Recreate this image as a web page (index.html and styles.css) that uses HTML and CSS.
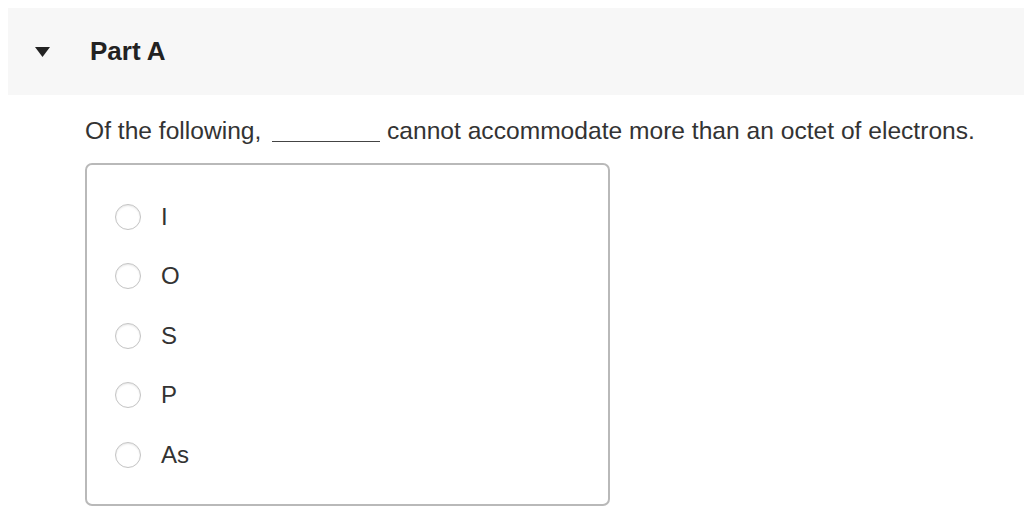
FILE: index.html
```html
<!DOCTYPE html>
<html lang="en">
<head>
  <meta charset="UTF-8">
  <title>Part A</title>
  <link rel="stylesheet" href="styles.css">
</head>
<body>

  <section class="part">
    <header class="part-head">
      <svg class="caret" width="15" height="10" viewBox="0 0 15 10" aria-hidden="true">
        <path d="M0 0 H15 L7.5 10 Z" fill="#222"/>
      </svg>
      <h2>Part A</h2>
    </header>

    <div class="part-body">
      <p class="question">Of the following, <span class="blank"></span> cannot accommodate more than an octet of electrons.</p>

      <!-- answer choices -->
      <div class="choices">
        <label class="choice"><input type="radio" name="answer" value="I"><span>I</span></label>
        <label class="choice"><input type="radio" name="answer" value="O"><span>O</span></label>
        <label class="choice"><input type="radio" name="answer" value="S"><span>S</span></label>
        <label class="choice"><input type="radio" name="answer" value="P"><span>P</span></label>
        <label class="choice"><input type="radio" name="answer" value="As"><span>As</span></label>
      </div>
    </div>
  </section>

</body>
</html>
```

FILE: styles.css
```css
:root {
  --band-bg: #f7f7f7;
  --text-color: #333333;
  --head-color: #222222;
  --box-border: #b9b9b9;
  --font-sans: "Liberation Sans", Arial, sans-serif;
}
*, *::before, *::after {
  box-sizing: border-box;
  margin: 0;
  padding: 0;
}
body {
  font-family: var(--font-sans);
  color: var(--text-color);
  background: #fff;
  padding: 8px 0 0 8px;
}
.part-head {
  display: flex;
  align-items: center;
  gap: 40px;
  height: 87px;
  padding-left: 27px;
  background: var(--band-bg);
}
.caret {
  display: block;
  flex: none;
}
.part-head h2 {
  font-size: 26px;
  font-weight: bold;
  color: var(--head-color);
}
.part-body {
  padding-left: 77px;
}
.question {
  font-size: 24.6px;
  line-height: 28px;
  margin-top: 22px;
}
.blank {
  display: inline-block;
  width: 108px;
  margin-left: 4px;
  border-bottom: 1.5px solid #444;
  vertical-align: -3px;
}
.choices {
  width: 525px;
  margin-top: 18px;
  padding: 22px 0 19px 28px;
  border: 2px solid var(--box-border);
  border-radius: 7px;
}
.choice {
  display: flex;
  align-items: center;
  gap: 20px;
  height: 59.5px;
  font-size: 24px;
  cursor: pointer;
}
.choice input {
  appearance: none;
  -webkit-appearance: none;
  width: 26px;
  height: 26px;
  border-radius: 50%;
  border: 1px solid #c4c4c4;
  background: #fff;
  box-shadow: inset 0 1px 2px rgba(0,0,0,0.1);
  flex: none;
}
.choice input:checked {
  border-color: #2a6ebb;
  box-shadow: inset 0 0 0 7px #2a6ebb;
}
```
